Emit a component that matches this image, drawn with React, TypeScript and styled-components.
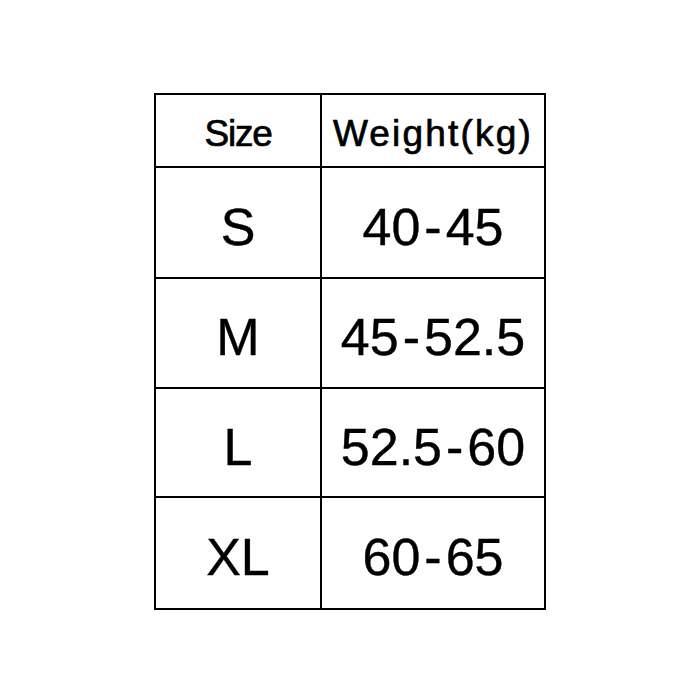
import styled, { createGlobalStyle } from 'styled-components';

const GlobalStyle = createGlobalStyle`
  html, body {
    margin: 0;
    padding: 0;
    background: #fff;
  }
`;

const Page = styled.div`
  width: 700px;
  height: 700px;
  padding: 93px 0 0 154px;
  box-sizing: border-box;
  font-family: 'Liberation Sans', Arial, sans-serif;
  color: #000;
`;

const Table = styled.table`
  border-collapse: collapse;
  table-layout: fixed;
  width: 390px;
`;

const Cell = styled.td<{ $head?: boolean; $track?: number }>`
  border: 2px solid #000;
  text-align: center;
  vertical-align: middle;
  padding: ${(p) => (p.$head ? '6px 0 0' : '8px 0 0')};
  font-size: ${(p) => (p.$head ? '37px' : '52px')};
  letter-spacing: ${(p) => p.$track ?? 0}px;
  -webkit-text-stroke: ${(p) => (p.$head ? '0.7px' : '0.4px')} #000;
  line-height: 1;
  white-space: nowrap;
`;

const Dash = styled.span`
  display: inline-block;
  margin: 0 4px;
`;

const Row = styled.tr<{ $h: number }>`
  height: ${(p) => p.$h}px;
`;

const rows: [string, string, string, number][] = [
  ['S', '40', '45', 111],
  ['M', '45', '52.5', 110],
  ['L', '52.5', '60', 109],
  ['XL', '60', '65', 112],
];

export default function App() {
  return (
    <Page>
      <GlobalStyle />
      <Table>
        <colgroup>
          <col style={{ width: 166 }} />
          <col style={{ width: 224 }} />
        </colgroup>
        <tbody>
          <Row $h={73}>
            <Cell $head $track={-1.2}>
              Size
            </Cell>
            <Cell $head $track={2.2}>
              Weight(kg)
            </Cell>
          </Row>
          {rows.map(([size, from, to, h]) => (
            <Row key={size} $h={h}>
              <Cell>{size}</Cell>
              <Cell>
                {from}
                <Dash>-</Dash>
                {to}
              </Cell>
            </Row>
          ))}
        </tbody>
      </Table>
    </Page>
  );
}
